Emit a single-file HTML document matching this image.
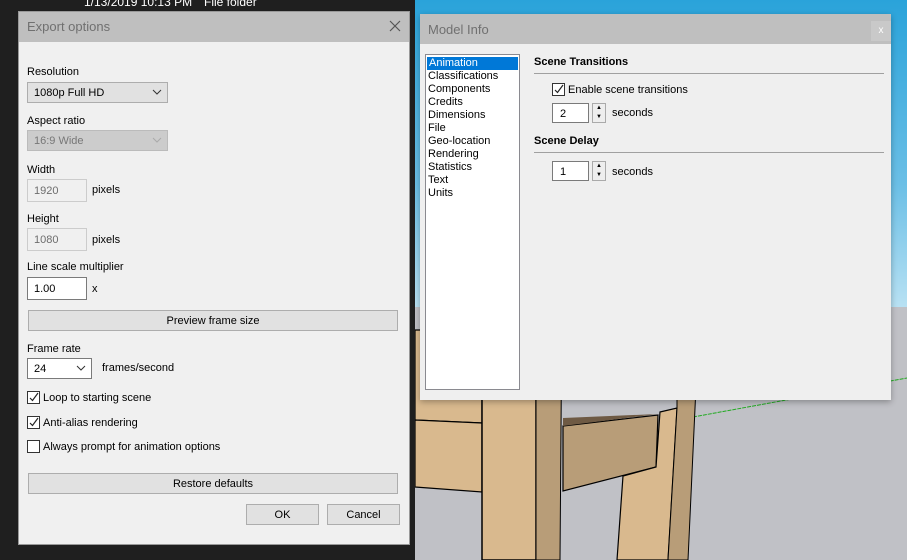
<!DOCTYPE html>
<html><head><meta charset="utf-8"><style>
*{box-sizing:border-box;margin:0;padding:0}
body{width:907px;height:560px;overflow:hidden;background:#1f1f1f;font-family:"Liberation Sans",sans-serif;font-size:11px;color:#000;position:relative}
.abs{position:absolute}
.lbl{position:absolute;font-size:11px;line-height:13px}
.sel{position:absolute;height:21px;border:1px solid #adadad;background:#e1e1e1;padding:4px 6px;font-size:11px;line-height:12px}
.inp{position:absolute;height:23px;border:1px solid #7a7a7a;background:#fff;padding:5px 6px;font-size:11px;line-height:12px}
.dis{border-color:#ccc;background:#f0f0f0;color:#6d6d6d}
.btn{position:absolute;height:21px;border:1px solid #adadad;background:#e1e1e1;text-align:center;line-height:20px;font-size:11px}
.cb{position:absolute;width:13px;height:13px;border:1px solid #333;background:#fff}
.chev{position:absolute;right:5px;top:3px}
</style></head><body>
<div class="abs" style="left:84px;top:-5px;color:#fff;font-size:12px">1/13/2019 10:13 PM</div>
<div class="abs" style="left:204px;top:-5px;color:#fff;font-size:12px">File folder</div>

<div class="abs" style="left:415px;top:0;width:492px;height:307px;background:linear-gradient(#2aa3da,#6bbfe6 60%,#b8e1f3)"></div>
<div class="abs" style="left:415px;top:307px;width:492px;height:253px;background:#c0c1c6"></div>
<svg class="abs" style="left:415px;top:300px" width="492" height="260">
<line x1="278" y1="117" x2="492" y2="78" stroke="#22aa22" stroke-width="1" stroke-dasharray="4 1"/>
<polygon points="0,30 67,30 67,123 0,120" fill="#d9b98e" stroke="#000" stroke-width="1.2"/>
<polygon points="0,120 67,123 67,192 0,187" fill="#d9b98e" stroke="#000" stroke-width="1.2"/>
<polygon points="67,0 121,0 121,260 67,260" fill="#d9b98e" stroke="#000" stroke-width="1.5"/>
<polygon points="121,0 147,0 145,260 121,260" fill="#b89d78" stroke="#000" stroke-width="1"/>
<polygon points="147,0 262,0 261,8 243,15 147,18" fill="#d9b98e" stroke="#000" stroke-width="1"/>
<polygon points="148,126 243,115 241,167 148,191" fill="#b89d78" stroke="#000" stroke-width="1.2"/>
<polygon points="148,118 243,114 148,126" fill="#6e5a44"/>
<polygon points="245,112 262,108 253,260 202,260 208,176 241,167" fill="#d9b98e" stroke="#000" stroke-width="1.2"/>
<polygon points="262,0 285,0 273,260 253,260 262,108" fill="#b89d78" stroke="#000" stroke-width="1"/>
</svg>

<div class="abs" style="left:18px;top:11px;width:392px;height:534px;background:#f0f0f0;border:1px solid #999">
 <div class="abs" style="left:0;top:0;width:390px;height:30px;background:#bfbfbf"></div>
 <div class="abs" style="left:8px;top:7px;font-size:13px;color:#707070">Export options</div>
 <svg class="abs" style="left:370px;top:8px" width="12" height="12"><path d="M1 1L11 11M11 1L1 11" stroke="#555" stroke-width="1.2"/></svg>
</div>
<div class="lbl" style="left:27px;top:66px">Resolution</div>
<div class="sel" style="left:27px;top:82px;width:141px">1080p Full HD<svg class="chev" width="10" height="12"><path d="M1 4L5 8L9 4" fill="none" stroke="#333"/></svg></div>
<div class="lbl" style="left:27px;top:115px">Aspect ratio</div>
<div class="sel" style="left:27px;top:130px;width:141px;background:#ccc;border-color:#bbb;color:#777">16:9 Wide<svg class="chev" width="10" height="12"><path d="M1 4L5 8L9 4" fill="none" stroke="#aaa"/></svg></div>
<div class="lbl" style="left:27px;top:164px">Width</div>
<div class="inp dis" style="left:27px;top:179px;width:60px">1920</div>
<div class="lbl" style="left:92px;top:184px">pixels</div>
<div class="lbl" style="left:27px;top:213px">Height</div>
<div class="inp dis" style="left:27px;top:228px;width:60px">1080</div>
<div class="lbl" style="left:92px;top:234px">pixels</div>
<div class="lbl" style="left:27px;top:261px">Line scale multiplier</div>
<div class="inp" style="left:27px;top:277px;width:60px">1.00</div>
<div class="lbl" style="left:92px;top:283px">x</div>
<div class="btn" style="left:28px;top:310px;width:370px">Preview frame size</div>
<div class="lbl" style="left:27px;top:343px">Frame rate</div>
<div class="sel" style="left:27px;top:358px;width:65px;background:#fff;border-color:#7a7a7a">24<svg class="chev" width="10" height="12"><path d="M1 4L5 8L9 4" fill="none" stroke="#333"/></svg></div>
<div class="lbl" style="left:102px;top:362px">frames/second</div>
<div class="cb" style="left:27px;top:391px"><svg width="11" height="11" class="abs"><path d="M2 6L4.5 8.5L10 1" fill="none" stroke="#222" stroke-width="1.2"/></svg></div>
<div class="lbl" style="left:43px;top:392px">Loop to starting scene</div>
<div class="cb" style="left:27px;top:416px"><svg width="11" height="11" class="abs"><path d="M2 6L4.5 8.5L10 1" fill="none" stroke="#222" stroke-width="1.2"/></svg></div>
<div class="lbl" style="left:43px;top:417px">Anti-alias rendering</div>
<div class="cb" style="left:27px;top:440px"></div>
<div class="lbl" style="left:43px;top:441px">Always prompt for animation options</div>
<div class="btn" style="left:28px;top:473px;width:370px">Restore defaults</div>
<div class="btn" style="left:246px;top:504px;width:73px">OK</div>
<div class="btn" style="left:327px;top:504px;width:73px">Cancel</div>

<div class="abs" style="left:420px;top:14px;width:471px;height:386px;background:#efefef;box-shadow:0 2px 6px rgba(0,0,0,.3)">
 <div class="abs" style="left:0;top:0;width:471px;height:30px;background:#bfbfbf"></div>
 <div class="abs" style="left:8px;top:8px;font-size:13px;color:#707070">Model Info</div>
 <div class="abs" style="left:451px;top:7px;width:20px;height:20px;background:#c9c9c9;color:#fff;font-size:10px;text-align:center;line-height:19px">x</div>
 <div class="abs" style="left:5px;top:40px;width:95px;height:336px;background:#fff;border:1px solid #8a8a90;font-size:11px;line-height:13px;padding-top:2px">
  <div style="background:#0078d7;color:#fff;margin:0 1px;padding-left:2px">Animation</div>
  <div style="padding-left:2px">Classifications<br>Components<br>Credits<br>Dimensions<br>File<br>Geo-location<br>Rendering<br>Statistics<br>Text<br>Units</div>
 </div>
 <div class="abs" style="left:114px;top:42px;font-weight:bold;font-size:11px">Scene Transitions</div>
 <div class="abs" style="left:114px;top:59px;width:350px;border-top:1px solid #a0a0a0"></div>
 <div class="cb" style="left:132px;top:69px;background:#fff"><svg width="11" height="11" class="abs"><path d="M2 6L4.5 8.5L10 1" fill="none" stroke="#222" stroke-width="1.2"/></svg></div>
 <div class="abs" style="left:148px;top:70px;font-size:11px">Enable scene transitions</div>
 <div class="abs" style="left:132px;top:89px;width:37px;height:20px;background:#fff;border:1px solid #7a7a7a;padding:4px 7px;font-size:11px;line-height:12px">2</div>
 <div class="abs" style="left:172px;top:89px;width:14px;height:20px;border:1px solid #aaa;background:#eee;font-size:6px;line-height:9px;text-align:center">▲<br>▼</div>
 <div class="abs" style="left:192px;top:93px;font-size:11px">seconds</div>
 <div class="abs" style="left:114px;top:121px;font-weight:bold;font-size:11px">Scene Delay</div>
 <div class="abs" style="left:114px;top:138px;width:350px;border-top:1px solid #a0a0a0"></div>
 <div class="abs" style="left:132px;top:147px;width:37px;height:20px;background:#fff;border:1px solid #7a7a7a;padding:4px 7px;font-size:11px;line-height:12px">1</div>
 <div class="abs" style="left:172px;top:147px;width:14px;height:20px;border:1px solid #aaa;background:#eee;font-size:6px;line-height:9px;text-align:center">▲<br>▼</div>
 <div class="abs" style="left:192px;top:152px;font-size:11px">seconds</div>
</div>
</body></html>
